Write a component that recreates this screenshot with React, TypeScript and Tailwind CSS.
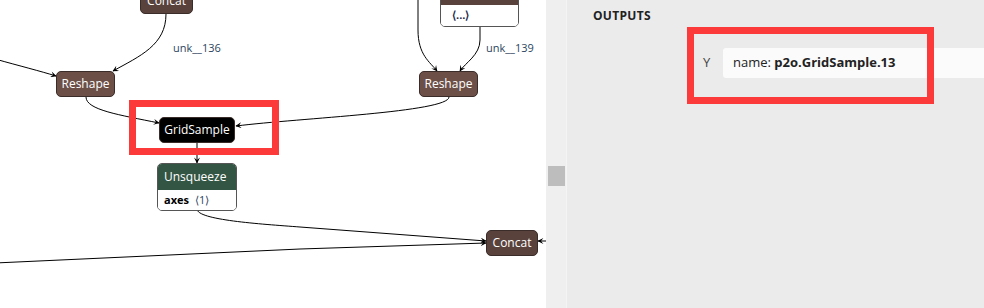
import React from 'react'

const font = { fontFamily: '"Open Sans", "Noto Sans", sans-serif' }

function Edges() {
  return (
    <svg className="absolute left-0 top-0" width="546" height="308" viewBox="0 0 546 308">
      <defs>
        <marker id="arrow" viewBox="0 0 10 10" refX="9" refY="5" markerWidth="8" markerHeight="6" orient="auto">
          <path d="M0,0 L10,5 L0,10 L4,5 z" fill="#000" />
        </marker>
      </defs>
      <g fill="none" stroke="#000" strokeWidth="1" markerEnd="url(#arrow)">
        <path d="M166,14 C166,45 140,56 113,71" />
        <path d="M-5,59 C20,66 40,71 56,76" />
        <path d="M86,97 C86,110 120,115 159,123" />
        <path d="M449,97 C449,112 300,118 236,126" />
        <path d="M418,-5 L418,30 C418,55 430,62 437,71" />
        <path d="M480,25 L480,40 C480,55 465,63 460,71" />
        <path d="M197,142 L197,163" />
        <path d="M197,209 C197,220 260,224 300,227 L486,241" />
        <path d="M-5,263 L300,249 L486,243" />
        <path d="M550,241 L538,241" />
      </g>
    </svg>
  )
}

function Node({ x, y, w, label, bg }: { x: number; y: number; w: number; label: string; bg: string }) {
  return (
    <div
      className={`absolute flex h-[26px] items-center justify-center rounded-[5px] border border-[#3a2c28] text-[12px] text-white ${bg}`}
      style={{ left: x, top: y, width: w }}
    >
      {label}
    </div>
  )
}

export default function App() {
  return (
    <div className="flex h-[308px] w-[984px] overflow-hidden" style={font}>
      <div className="relative h-[308px] w-[546px] shrink-0 overflow-hidden bg-white">
        <Edges />

        <Node x={140} y={-12} w={53} label="Concat" bg="bg-[#59423b]" />

        <div className="absolute left-[440px] top-[-10px] w-[79px] overflow-hidden rounded-[5px] border border-[#555]">
          <div className="h-[14px] bg-[#59423b]" />
          <div className="flex h-[21px] items-center bg-white pl-[11px] text-[11px] font-bold text-[#1d2b4a]">⟨...⟩</div>
        </div>

        <div className="absolute left-[173px] top-[40px] text-[11px] text-[#2b4560]">unk__136</div>
        <div className="absolute left-[486px] top-[40px] text-[11px] text-[#2b4560]">unk__139</div>

        <Node x={56} y={71} w={59} label="Reshape" bg="bg-[#6c4f47]" />
        <Node x={419} y={71} w={59} label="Reshape" bg="bg-[#6c4f47]" />
        <Node x={159} y={117} w={76} label="GridSample" bg="bg-black" />

        <div className="absolute left-[157px] top-[163px] w-[80px] overflow-hidden rounded-[5px] border border-[#555]">
          <div className="flex h-[26px] items-center bg-[#335544] pl-[6px] text-[12px] text-white">Unsqueeze</div>
          <div className="flex h-[20px] items-center gap-[6px] bg-white pl-[6px] text-[11px]">
            <span className="font-bold text-black">axes</span>
            <span className="text-[#2b4560]">⟨1⟩</span>
          </div>
        </div>

        <Node x={486} y={230} w={52} label="Concat" bg="bg-[#59423b]" />

        <div className="absolute left-[129px] top-[100px] h-[55px] w-[150px] border-[7px] border-[#fc3a3a]" />
      </div>

      <div className="w-[20px] shrink-0 bg-[#efefef] pl-[2px] pt-[166px]">
        <div className="h-[20px] w-[17px] bg-[#bdbdbd]" />
      </div>

      <div className="relative flex-1 border-l border-[#f4f4f4] bg-[#ebebeb]">
        <div className="pl-[26px] pt-[7px] text-[12px] font-bold tracking-[0.3px] text-[#222]">OUTPUTS</div>
        <div className="mt-[23px] flex h-[30px] items-center pl-[136px]">
          <div className="w-[20px] text-[13px] text-[#444]">Y</div>
          <div className="flex h-[30px] flex-1 items-center rounded-l-[3px] bg-[#fbfbfb] pl-[10px] text-[13px] text-[#222]">
            name:&nbsp;<span className="font-bold">p2o.GridSample.13</span>
          </div>
        </div>
        <div className="absolute left-[120px] top-[27px] h-[77px] w-[247px] border-[7px] border-[#fc3a3a]" />
      </div>
    </div>
  )
}
